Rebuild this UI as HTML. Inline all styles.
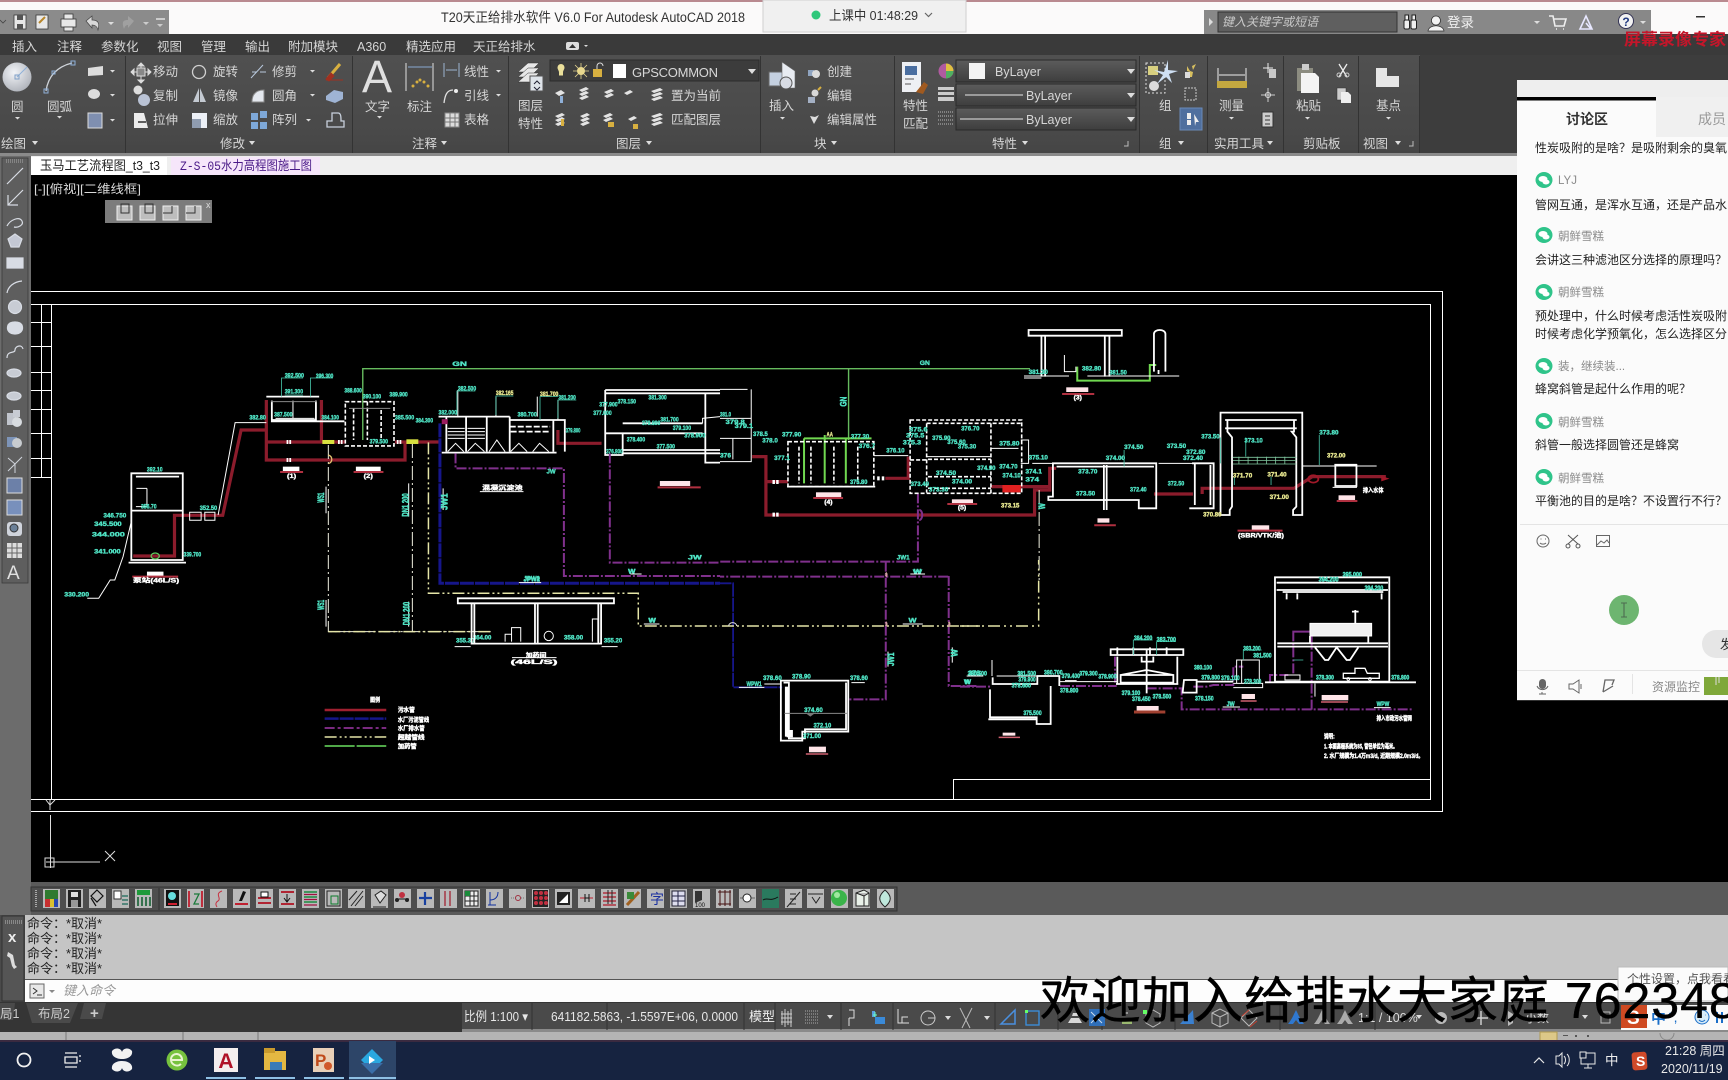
<!DOCTYPE html>
<html><head><meta charset="utf-8"><style>
html,body{margin:0;padding:0;background:#000;width:1728px;height:1080px;overflow:hidden}
svg{display:block;font-family:"Liberation Sans","Noto Sans CJK SC",sans-serif}
.l{font-size:12.5px;fill:#d6d6d6}
.c{font-size:12px;fill:#222}
.n{font-size:11.5px;fill:#8a8a8a}
.m{font-size:13px;fill:#222}
.d *{vector-effect:non-scaling-stroke;fill:none}
.d text{fill:#4fe3c4;stroke:#4fe3c4;stroke-width:.45;font-size:20px;font-weight:bold}
.d text.y{fill:#e8e890;stroke:#e8e890}
.d text.w{fill:#fff;stroke:#fff;font-size:18px}
.d rect.b{fill:#fff;stroke:none}
.d rect.p{fill:#ffe4e8;stroke:none}
.wh{stroke:#fff;stroke-width:1}
.wt{stroke:#fff;stroke-width:1.8}
.wd{stroke:#fff;stroke-width:1.6;stroke-dasharray:4 2}
.re{stroke:#8c1c2c;stroke-width:3.2}
.bl{stroke:#16168a;stroke-width:2.6;stroke-dasharray:14 1}
.pu{stroke:#80308c;stroke-width:2;stroke-dasharray:10 2 2 2}
.ye{stroke:#e6e6a8;stroke-width:1.5;stroke-dasharray:12 3 2 3 2 3}
.yw{stroke:#f0f0e0;stroke-width:1;stroke-dasharray:14 3 2 3}
.gr{stroke:#66bb5e;stroke-width:1.4}
.tl{stroke:#48c8ac;stroke-width:.8}
.gy{stroke:#888;stroke-width:1}
</style></head><body>
<svg width="1728" height="1080" viewBox="0 0 1728 1080" xmlns="http://www.w3.org/2000/svg">
<defs>
<linearGradient id="rb" x1="0" y1="0" x2="0" y2="1"><stop offset="0" stop-color="#505050"/><stop offset=".8" stop-color="#494949"/><stop offset="1" stop-color="#454545"/></linearGradient>
<linearGradient id="dd" x1="0" y1="0" x2="0" y2="1"><stop offset="0" stop-color="#5c5c5c"/><stop offset="1" stop-color="#3e3e3e"/></linearGradient>
<radialGradient id="ci" cx=".4" cy=".35" r=".8"><stop offset="0" stop-color="#f2f4f8"/><stop offset="1" stop-color="#a4a8b0"/></radialGradient>
</defs>

<!-- base -->
<rect width="1728" height="1080" fill="#000"/>
<rect x="0" y="0" width="1728" height="34" fill="#fbfafa"/>
<rect x="0" y="0" width="1728" height="2" fill="#b98a90"/>
<rect x="0" y="34" width="1728" height="21" fill="#3a3a3a"/>
<rect x="0" y="55" width="1420" height="98" fill="url(#rb)"/>
<rect x="1420" y="55" width="308" height="98" fill="#3d3d3d"/>
<rect x="0" y="153" width="1728" height="3" fill="#8a8a8a"/>
<rect x="0" y="156" width="1728" height="19" fill="#efefef"/>

<!-- QAT -->
<rect x="0" y="10" width="169" height="24" fill="#8b8b8b"/>
<g fill="#e8e8e8" stroke="#3a3a3a" stroke-width=".8">
<path d="M0 20l3 3 3-3" fill="none" stroke="#444"/>
<rect x="14" y="15" width="12" height="14" />
<rect x="36" y="15" width="12" height="14"/>
<rect x="61" y="19" width="15" height="8"/><rect x="64" y="14" width="9" height="5"/><rect x="64" y="27" width="9" height="4"/>
</g>
<path d="M17 15h6v5h-6zM17 24h6v5h-6z" fill="#555"/>
<path d="M39 23l6-6" stroke="#b8862a" stroke-width="2"/>
<path d="M86 21l6-5v4c6 0 8 3 6 10-1-4-3-5-6-5v3z" fill="#d8d8d8" stroke="#444" stroke-width=".7"/>
<path d="M108 22l3 3 3-3z" fill="#ddd"/>
<path d="M134 21l-6-5v4c-6 0-6 3-4 9 1-3 2-4 4-4v3z" fill="#a0a0a0"/>
<path d="M143 22l3 3 3-3zM156 18h9v2h-9zM157 24l3 3 3-3z" fill="#ccc"/>

<!-- title -->
<text x="441" y="22" font-size="13.5" fill="#333" textLength="304" lengthAdjust="spacingAndGlyphs">T20天正给排水软件 V6.0 For Autodesk AutoCAD 2018</text>

<!-- timer -->
<rect x="763" y="0" width="203" height="32" fill="#f0f0f0" stroke="#cfcfcf"/>
<circle cx="816" cy="15" r="4.5" fill="#2fc77a"/>
<text x="829" y="20" font-size="13" fill="#333" textLength="89" lengthAdjust="spacingAndGlyphs">上课中 01:48:29</text>
<path d="M925 13l3.5 3.5 3.5-3.5" fill="none" stroke="#666" stroke-width="1.2"/>

<!-- search area -->
<rect x="1204" y="10" width="447" height="24" fill="#888"/>
<rect x="1218" y="12" width="179" height="20" fill="#5f5f5f" stroke="#333"/>
<path d="M1209 18l4 4-4 4z" fill="#ddd"/>
<text x="1222" y="26" font-size="12" font-style="italic" fill="#c8c8c8">键入关键字或短语</text>
<g fill="#f0f0f0" stroke="#222" stroke-width="1"><rect x="1404" y="20" width="5.500" height="9" rx="1.500"/><rect x="1411" y="20" width="5.500" height="9" rx="1.500"/><rect x="1405" y="15" width="3.500" height="5"/><rect x="1412" y="15" width="3.500" height="5"/></g>
<path d="M1436 16a4.500 4.500 0 1 1-.1 0zM1428 31c1-7 15-7 16 0z" fill="#f2f2f2" stroke="#333" stroke-width=".8"/>
<text x="1447" y="27" font-size="13.5" fill="#f0f0f0">登录</text>
<path d="M1534 21l3 3 3-3z" fill="#ddd"/>
<path d="M1549 16h4l2 10h9l2-7h-12M1556 29h1M1563 29h1" fill="none" stroke="#eee" stroke-width="1.6"/>
<path d="M1580 29l6-13 6 13zM1586 23l5 6" fill="none" stroke="#e8e8ff" stroke-width="1.6"/>
<circle cx="1626" cy="21" r="7.500" fill="#f2f2f2" stroke="#335" stroke-width="1"/>
<text x="1626" y="26" font-size="12" font-weight="bold" text-anchor="middle" fill="#223a80">?</text>
<path d="M1640 21l3 3 3-3z" fill="#ddd"/>
<rect x="1696" y="16" width="9" height="1.500" fill="#333"/>
<text x="1624" y="45" font-size="16.500" font-weight="bold" fill="#c4162a" textLength="102" lengthAdjust="spacingAndGlyphs">屏幕录像专家</text>

<!-- ribbon tabs -->
<g class="l">
<text x="12" y="51">插入</text><text x="57" y="51">注释</text><text x="101" y="51">参数化</text><text x="157" y="51">视图</text><text x="201" y="51">管理</text><text x="245" y="51">输出</text><text x="288" y="51">附加模块</text><text x="357" y="51">A360</text><text x="406" y="51">精选应用</text><text x="473" y="51">天正给排水</text>
</g>
<rect x="566" y="42" width="13" height="8" rx="2" fill="#ddd"/><path d="M569 48l3.500-4 3.500 4z" fill="#333"/><path d="M584 45l2 2 2-2z" fill="#ddd"/>

<!-- ribbon separators -->
<g fill="#333"><rect x="125" y="56" width="1" height="97"/><rect x="352" y="56" width="1" height="97"/><rect x="508" y="56" width="1" height="97"/><rect x="760" y="56" width="1" height="97"/><rect x="894" y="56" width="1" height="97"/><rect x="1139" y="56" width="1" height="97"/><rect x="1207" y="56" width="1" height="97"/><rect x="1283" y="56" width="1" height="97"/><rect x="1358" y="56" width="1" height="97"/><rect x="1419" y="56" width="1" height="97"/></g>

<!-- draw panel -->
<circle cx="17" cy="77" r="14.500" fill="url(#ci)"/><path d="M17 77l10-10" stroke="#8fb0d8"/><rect x="15" y="75" width="4" height="4" fill="none" stroke="#7fa0c8"/>
<path d="M46 91c2-14 10-24 26-28" fill="none" stroke="#cfd4da" stroke-width="1.300"/><g fill="none" stroke="#8fb0d8"><rect x="44" y="89" width="4" height="4"/><rect x="52" y="71" width="3" height="3"/><rect x="71" y="61" width="4" height="4"/></g>
<g fill="#dcdcdc"><path d="M88 68l15-2v9l-15 1z"/><ellipse cx="94" cy="94" rx="6" ry="5"/><rect x="88" y="113" width="14" height="15" fill="#7f8fb0" stroke="#ddd"/></g>
<g fill="#ddd"><path d="M110 70l2.500 2.500 2.500-2.500zM110 94l2.500 2.500 2.500-2.500zM110 119l2.500 2.500 2.500-2.500zM15 117l2.500 2.500 2.500-2.500zM57 116l2.500 2.500 2.500-2.500zM377 116l2.500 2.500 2.500-2.500zM310 70l2.500 2.500 2.500-2.500zM310 94l2.500 2.500 2.500-2.500zM306 119l2.500 2.500 2.500-2.500zM496 70l2.500 2.500 2.500-2.500zM496 94l2.500 2.500 2.500-2.500zM780 117l2.500 2.500 2.500-2.500zM1229 117l2.500 2.500 2.500-2.500zM1305 117l2.500 2.500 2.500-2.500zM1386 117l2.500 2.500 2.500-2.500z"/></g>
<text class="l" x="11" y="111">圆</text><text class="l" x="47" y="111">圆弧</text>

<!-- modify panel -->
<path d="M141 63v20M131 72h20M141 63l-3 3h6zM141 83l-3-3h6zM131 72l3-3v6zM151 72l-3-3v6z" fill="#dcdcdc" stroke="#dcdcdc"/><rect x="137" y="68" width="8" height="8" fill="#888" stroke="#ddd"/>
<circle cx="138" cy="90" r="4.500" fill="#ddd"/><circle cx="144" cy="100" r="6" fill="#b9c2d4"/>
<path d="M134 113h10l4 15h-14z" fill="#ececec"/><path d="M138 122h8" stroke="#111" stroke-width="1.300"/>
<text class="l" x="153" y="76">移动</text><text class="l" x="153" y="100">复制</text><text class="l" x="153" y="124">拉伸</text>
<circle cx="199" cy="72" r="6.500" fill="none" stroke="#d0d0d0" stroke-width="1.300"/>
<path d="M199 88l-6 14h6zM200 88l6 14h-6z" fill="#c4cad2"/>
<rect x="192" y="113" width="15" height="15" fill="#ecf0f6"/><rect x="192" y="119" width="9" height="9" fill="#8f9cb0"/>
<text class="l" x="213" y="76">旋转</text><text class="l" x="213" y="100">镜像</text><text class="l" x="213" y="124">缩放</text>
<path d="M251 78l12-13M252 72h5M260 72h6" stroke="#b8c8dc" fill="none"/>
<path d="M252 102c0-8 4-12 12-12v12z" fill="#e4e8ee" stroke="#888"/>
<g fill="#7ea8d8"><rect x="251" y="113" width="7" height="7"/><rect x="260" y="111" width="7" height="7"/><rect x="251" y="122" width="7" height="7"/><rect x="260" y="122" width="7" height="7"/></g>
<text class="l" x="272" y="76">修剪</text><text class="l" x="272" y="100">圆角</text><text class="l" x="272" y="124">阵列</text>
<path d="M328 78l12-14" stroke="#d8b040" stroke-width="3"/><path d="M326 79l5-6 3 3-5 5zM326 80h17" stroke="#a03020" fill="#a03020"/>
<path d="M326 96l8-6 9 2v7l-8 4-9-3z" fill="#9fb4d4"/>
<path d="M327 127v-6h5v-8h6c3 0 3 4 3 8h3v6z" fill="none" stroke="#c8d0dc" stroke-width="1.300"/>

<!-- annotation -->
<text x="362" y="92" font-size="45" fill="#e0e0e0">A</text>
<text class="l" x="365" y="111">文字</text>
<path d="M406 63v28M433 63v28" stroke="#e0e0e0"/><path d="M408 67h24" stroke="#88a8d0"/><g fill="#d8b040"><circle cx="413" cy="86" r="1.500"/><circle cx="417" cy="82" r="1.500"/><circle cx="420" cy="80" r="1.500"/><circle cx="424" cy="82" r="1.500"/><circle cx="428" cy="86" r="1.500"/></g>
<text class="l" x="407" y="111">标注</text>
<path d="M444 63v14M459 63v14M446 70h11" stroke="#9cb4d0"/>
<text class="l" x="464" y="76">线性</text>
<path d="M444 103c1-8 3-13 9-13" fill="none" stroke="#e0e0e0" stroke-width="1.300"/><circle cx="456" cy="91" r="2" fill="#eee"/>
<text class="l" x="464" y="100">引线</text>
<rect x="445" y="113" width="14" height="14" fill="#ddd" stroke="#888"/><path d="M445 118h14M445 122h14M450 113v14M455 113v14" stroke="#777"/>
<text class="l" x="464" y="124">表格</text>

<!-- layers -->
<g fill="#e8e8e8" stroke="#333" stroke-width=".5"><path d="M518 72l10-9h11l-9 9z"/><path d="M518 77l10-9h11l-9 9z"/><path d="M518 82l10-9h11l-9 9z"/></g>
<rect x="530" y="76" width="13" height="15" fill="#dfe4ea" stroke="#555"/><path d="M534 84l3-3 3 3M534 87l3 3 3-3" stroke="#223" fill="none"/>
<text class="l" x="518" y="110">图层</text><text class="l" x="518" y="128">特性</text>
<rect x="550" y="60" width="209" height="21" fill="#3c3c3c" stroke="#2c2c2c"/>
<path d="M561 64a3.500 3.500 0 0 1 3.500 3.500c0 2-1.500 3-1.500 5v3h-4v-3c0-2-1.500-3-1.500-5a3.500 3.500 0 0 1 3.500-3.500z" fill="#eadf9a"/>
<circle cx="581" cy="71" r="4" fill="#ead98c"/><path d="M581 63v16M573 71h16M575 65l12 12M587 65l-12 12" stroke="#e8d890" stroke-width=".8"/>
<rect x="593" y="69" width="9" height="8" fill="#d8b040"/><path d="M597 69v-3a3 3 0 0 1 6 0" fill="none" stroke="#ddd"/>
<rect x="613" y="64" width="13" height="14" fill="#fff"/>
<text x="632" y="77" font-size="13" fill="#d8d8d8" textLength="86">GPSCOMMON</text>
<path d="M748 69l4 5 4-5z" fill="#ddd"/>
<g fill="#e4e4e4"><path d="M555 93l6-3 4 3-6 3zM579 90l7-3 3 2-7 3zM579 94l7-3 3 2-7 3zM579 98l7-3 3 2-7 3zM604 92l7-3 3 2-7 3zM604 96l7-3 3 2-7 3zM624 93l6-3 3 2-6 3zM651 91l9-3 3 2-9 3zM651 95l9-3 3 2-9 3zM651 99l9-3 3 2-9 3z"/><path d="M555 116l7-3 3 2-7 3zM555 120l7-3 3 2-7 3zM555 124l7-3 3 2-7 3zM580 116l7-3 3 2-7 3zM580 120l7-3 3 2-7 3zM580 124l7-3 3 2-7 3zM603 116l7-3 3 2-7 3zM603 120l7-3 3 2-7 3zM628 119l6-3 3 2-6 3zM651 116l9-3 3 2-9 3zM651 120l9-3 3 2-9 3zM651 124l9-3 3 2-9 3z"/></g>
<g fill="#d8b040"><rect x="561" y="119" width="3" height="7"/><rect x="608" y="122" width="6" height="5"/><rect x="633" y="124" width="5" height="5"/><rect x="560" y="96" width="3" height="7" fill="#8fb0d8"/></g>
<text class="l" x="671" y="100">置为当前</text><text class="l" x="671" y="124">匹配图层</text>
<text class="l" x="769" y="110">插入</text>
<rect x="769" y="72" width="15" height="14" fill="#c4d0e0" stroke="#666"/><path d="M782 62l13 9v17h-13z" fill="#e8ecf2" stroke="#666" stroke-width=".6"/><circle cx="786" cy="83" r="6" fill="#d8dce4" stroke="#555"/>
<rect x="808" y="70" width="6" height="6" fill="#8fa4c0"/><circle cx="816" cy="74" r="4" fill="#dcdcdc"/><text class="l" x="827" y="76">创建</text>
<rect x="808" y="97" width="7" height="6" fill="#a4b0c4"/><circle cx="815" cy="93" r="3.500" fill="#d8d8d8"/><path d="M818 90l3-3" stroke="#d8b040" stroke-width="2"/><text class="l" x="827" y="100">编辑</text>
<path d="M810 116l4 8 5-9-4 2z" fill="#ddd"/><text class="l" x="827" y="124">编辑属性</text>

<!-- properties -->
<rect x="902" y="62" width="19" height="30" fill="#eef0f4"/><rect x="905" y="66" width="12" height="9" fill="#4a6ea0"/><path d="M905 79h9M905 84h6" stroke="#555"/><path d="M916 92l8-10 4 3-5 9z" fill="#a05a20"/>
<text class="l" x="903" y="110">特性</text><text class="l" x="903" y="128">匹配</text>
<circle cx="946" cy="71" r="7.500" fill="#b05aa0"/><path d="M946 71v-7.500a7.500 7.500 0 0 1 7.500 7.500z" fill="#e0c040"/><path d="M946 71h7.500a7.500 7.500 0 0 1-7.500 7.500z" fill="#50b060"/>
<rect x="938" y="87" width="16" height="3" fill="#ccc"/><rect x="938" y="92" width="16" height="3" fill="#ccc"/><rect x="938" y="97" width="16" height="4" fill="#ccc"/>
<path d="M938 112h16M938 116h16M938 120h16M938 124h16" stroke="#bbb" stroke-dasharray="1 1"/>
<g fill="url(#dd)" stroke="#2a2a2a"><rect x="956" y="60" width="180" height="22"/><rect x="956" y="84" width="180" height="22"/><rect x="956" y="108" width="180" height="22"/></g>
<rect x="969" y="63" width="16" height="16" fill="#f4f4f4"/>
<text class="l" x="995" y="76">ByLayer</text>
<path d="M965 95h58M960 119h63" stroke="#e8e8e8"/>
<text class="l" x="1026" y="100">ByLayer</text><text class="l" x="1026" y="124">ByLayer</text>
<path d="M1127 69l4 5 4-5zM1127 93l4 5 4-5zM1127 117l4 5 4-5z" fill="#ddd"/>

<!-- group -->
<rect x="1146" y="63" width="19" height="30" fill="none" stroke="#ddd" stroke-dasharray="2 2"/><rect x="1148" y="66" width="10" height="9" fill="#d8d080"/><circle cx="1154" cy="86" r="5" fill="#dcdcdc"/>
<path d="M1168 60l-4 12-10-2 9 5-6 9 9-7 6 6-3-9 9-3-10-1z" fill="#cfe0f4"/>
<text class="l" x="1159" y="110">组</text>
<path d="M1187 66l3 5 3 1-1 5h-3l1-5-3-1zM1192 66l4-2-3 6z" fill="#d8c060"/><rect x="1185" y="72" width="5" height="6" fill="#dcdcdc"/>
<rect x="1185" y="88" width="11" height="12" fill="none" stroke="#ccc" stroke-dasharray="2 1"/>
<rect x="1180" y="108" width="22" height="22" fill="#4f6f9e" stroke="#6a8ab8"/><path d="M1187 113h4v6h-4zM1187 120h4v5h-4zM1194 114l5 8-3 0-1 4z" fill="#eee"/>
<path d="M1218 68v14M1246 68v14M1219 75h26" stroke="#eee" fill="none"/>
<rect x="1217" y="81" width="30" height="7" fill="#c4a840"/>
<text class="l" x="1219" y="110">测量</text>
<path d="M1263 68h10M1268 63v10" stroke="#eee"/><rect x="1269" y="69" width="7" height="9" fill="#c8c8c8"/>
<path d="M1268 88v14M1261 95h14" stroke="#ccc"/><circle cx="1268" cy="95" r="2.500" fill="none" stroke="#ddd"/>
<rect x="1262" y="112" width="11" height="15" fill="#ccc" stroke="#333"/><path d="M1265 116h5M1265 120h5M1265 124h5" stroke="#333"/>

<!-- clipboard -->
<rect x="1297" y="68" width="16" height="23" fill="#8c8c80"/><rect x="1302" y="64" width="7" height="6" fill="#ccc"/><path d="M1301 73h14l4 4v16h-18z" fill="#f4f4f4"/>
<text class="l" x="1296" y="110">粘贴</text>
<path d="M1339 64l8 13M1347 64l-8 13" stroke="#eee" stroke-width="1.300"/><circle cx="1339" cy="75" r="2" fill="none" stroke="#ccc"/><circle cx="1347" cy="75" r="2" fill="none" stroke="#ccc"/>
<rect x="1337" y="88" width="9" height="12" fill="#ccc" stroke="#333" stroke-width=".5"/><path d="M1341 92h7l3 3v8h-10z" fill="#eee"/>
<path d="M1376 68h11v8h12v11h-23z" fill="#e6e6e6"/>
<text class="l" x="1376" y="110">基点</text>

<!-- panel labels -->
<g class="l"><text x="1" y="148">绘图</text><text x="220" y="148">修改</text><text x="412" y="148">注释</text><text x="616" y="148">图层</text><text x="814" y="148">块</text><text x="992" y="148">特性</text><text x="1159" y="148">组</text><text x="1214" y="148">实用工具</text><text x="1303" y="148">剪贴板</text><text x="1363" y="148">视图</text></g>
<path d="M32 141l3 4 3-4zM249 141l3 4 3-4zM441 141l3 4 3-4zM646 141l3 4 3-4zM831 141l3 4 3-4zM1022 141l3 4 3-4zM1178 141l3 4 3-4zM1267 141l3 4 3-4zM1395 141l3 4 3-4z" fill="#ddd"/>
<path d="M1128 141v5h-4M1413 141v5h-4" stroke="#bbb" fill="none"/>

<!-- doc tabs -->
<rect x="31" y="157" width="136" height="18" fill="#fff"/>
<rect x="171" y="157" width="149" height="18" fill="#f6e6fa"/>
<text x="40" y="170" font-size="13" fill="#222" textLength="120" lengthAdjust="spacingAndGlyphs">玉马工艺流程图_t3_t3</text>
<text x="180" y="170" font-size="13" fill="#4a1a88" textLength="132" lengthAdjust="spacingAndGlyphs" font-family="'Liberation Mono','Noto Sans CJK SC',monospace">Z-S-05水力高程图施工图</text>

<!-- drawing black area already -->
<text x="34" y="193" font-size="12" fill="#d8d8d8" textLength="107" lengthAdjust="spacingAndGlyphs">[-][俯视][二维线框]</text>
<rect x="105" y="200" width="107" height="23" fill="#7c7c7c"/>
<g fill="#bdbdbd" stroke="#eee"><rect x="117" y="206" width="15" height="14"/><rect x="140" y="206" width="15" height="14"/><rect x="163" y="206" width="15" height="14"/><rect x="186" y="206" width="15" height="14"/></g>
<path d="M121 204h8v9h-8zM145 204h8v9h-8zM163 213h9v-7M186 213h9v-7" fill="none" stroke="#333"/>
<text x="206" y="208" font-size="9" fill="#ddd">x</text>

<!-- frames -->
<g fill="none" stroke="#fff" stroke-width="1">
<path d="M31 291.500H1442.500V811.500H31"/>
<path d="M31 304.500H1430.500V799.500H31"/>
<path d="M51.500 304.500V799.500"/>
<path d="M953.500 799V779.500H1430"/>
<path d="M31 322.500H51M31 346.500H51M31 372.500H51M31 390.500H51M31 409.500H51M31 433.500H51M31 458.500H51M31 477.500H51"/>
<path d="M41.500 304.500V477"/>
</g>
<path d="M50.500 815V868M46 862H100M105 851l10 10M115 851l-10 10M50 800v10M46 800l4 5 5-5" fill="none" stroke="#ddd" stroke-width="1"/>
<rect x="45" y="858" width="9" height="9" fill="none" stroke="#ddd"/>

<!-- Zoom-6 diagram -->
<g class="d" transform="translate(0,280) scale(.4592,.3333)">
<path class="re" d="M290 828H380V706H485L525 450H580M580 360V540H882V486H955M580 486H700V360M700 486H752M860 486H882M1215 450V490H1310"/>
<path class="gr" d="M790 335V266H1568M790 266V480"/>
<path class="wh" d="M190 955H215L240 900H250L268 830L285 730M475 705L512 428H580"/>
<path class="wt" d="M286 690V580H398V840H286ZM286 692H398M296 590H390M280 848H405"/>
<path class="wh" d="M320 625V680H296M297 625H320M413 697h25v24h-25zM446 697h22v24h-22z"/>
<path class="wt" d="M580 350H695M592 362V420H688V362M590 424H750"/>
<path class="wh" d="M638 362V415M600 415H685"/>
<path class="wd" d="M752 365H858V498H752ZM800 365V480M770 385V480M830 390V480"/>
<path class="wt" d="M955 410H1110M972 410V515M1015 410V515M1060 410V515M1110 410V515M962 518H1212M1108 420H1230V515M1205 420V515"/>
<path class="wh" d="M975 445H1012M975 455H1012M975 465H1012M975 475H1012M1018 445H1056M1018 455H1056M1018 465H1056M1018 475H1056M975 515L992 490L1010 515M1018 515L1035 490L1055 515M1065 515L1082 480L1100 515M1112 515L1130 490L1148 515M1160 515L1175 490L1195 515"/>
<path class="wt" d="M1110 440H1198M1112 455H1198" stroke-dasharray="6 2"/>
<path class="wt" d="M1318 330V525H1356V460H1318M1318 330H1568M1318 340H1568M1536 340V548H1568M1356 430H1530M1356 460H1530M1356 510H1568M1356 520H1568"/>
<path class="wh" d="M1170 350V410M1215 360V420M1080 350V410M997 330V410M1530 430V415L1568 410"/>
<path class="gy" d="M590 365H690M760 385H850"/>
<path class="wt" d="M626 480v12M632 480v12M626 534v12M632 534v12M738 480v12M744 480v12M866 480v12M872 480v12" stroke-width="2.500"/>
<rect class="b" x="702" y="480" width="26" height="12" style="fill:#d8e040"/><rect class="b" x="885" y="478" width="26" height="14" style="fill:#d8e040"/>
<path class="bl" d="M958 430V910H1568" style="stroke-width:3"/>
<path class="pu" d="M992 520V565H1228V888H1568M1328 520V848H1568"/>
<path d="M962 425H975" style="stroke:#9a1c60;stroke-width:5"/>
<path class="yw" d="M715 495V1055H1070" />
<path class="ye" d="M715 1055H1070"/>
<path class="yw" d="M898 492V1055"/>
<path class="ye" d="M933 487V940H1390V1038H1568"/>
<path d="M715 525a12 14 0 0 1 0 26" style="stroke:#e0c070;stroke-width:1.300"/>
<path class="wh" d="M710 620V700M710 960V1040M890 610V710M890 965V1040M965 625V690" />
<!-- teal labels -->
<path class="tl" d="M613 350V294H660M676 350V294H725M620 345H660M995 405V333H1035M1080 405V348H1118M1176 420V350H1215M1215 415V360H1255"/>
<g>
<text x="320" y="574" textLength="34" lengthAdjust="spacingAndGlyphs">392.10</text>
<text x="307" y="686" textLength="34" lengthAdjust="spacingAndGlyphs">356.70</text>
<text x="435" y="690" textLength="38" lengthAdjust="spacingAndGlyphs">352.50</text>
<text x="225" y="712" textLength="50" lengthAdjust="spacingAndGlyphs">346.750</text>
<text x="205" y="738" textLength="60" lengthAdjust="spacingAndGlyphs">345.500</text>
<text x="200" y="770" textLength="72" lengthAdjust="spacingAndGlyphs">344.000</text>
<text x="205" y="820" textLength="58" lengthAdjust="spacingAndGlyphs">341.000</text>
<text x="400" y="830" textLength="38" lengthAdjust="spacingAndGlyphs">339.700</text>
<text x="140" y="950" textLength="54" lengthAdjust="spacingAndGlyphs">330.200</text>
<text x="620" y="292" textLength="42" lengthAdjust="spacingAndGlyphs">392.500</text>
<text x="688" y="294" textLength="38" lengthAdjust="spacingAndGlyphs">396.300</text>
<text x="620" y="340" textLength="40" lengthAdjust="spacingAndGlyphs">391.300</text>
<text x="597" y="410" textLength="40" lengthAdjust="spacingAndGlyphs">387.500</text>
<text x="543" y="418" textLength="36" lengthAdjust="spacingAndGlyphs">382.80</text>
<text x="700" y="418" textLength="38" lengthAdjust="spacingAndGlyphs">384.100</text>
<text x="790" y="355" textLength="40" lengthAdjust="spacingAndGlyphs">390.100</text>
<text x="848" y="350" textLength="40" lengthAdjust="spacingAndGlyphs">389.900</text>
<text x="750" y="338" textLength="38" lengthAdjust="spacingAndGlyphs">388.600</text>
<text x="860" y="418" textLength="42" lengthAdjust="spacingAndGlyphs">385.500</text>
<text x="905" y="428" textLength="38" lengthAdjust="spacingAndGlyphs">384.300</text>
<text x="955" y="403" textLength="40" lengthAdjust="spacingAndGlyphs">382.000</text>
<text x="997" y="332" textLength="40" lengthAdjust="spacingAndGlyphs">382.500</text>
<text class="y" x="1080" y="345" textLength="38" lengthAdjust="spacingAndGlyphs">382.165</text>
<text class="y" x="1176" y="348" textLength="40" lengthAdjust="spacingAndGlyphs">381.700</text>
<text x="1216" y="358" textLength="38" lengthAdjust="spacingAndGlyphs">381.200</text>
<text x="1127" y="410" textLength="42" lengthAdjust="spacingAndGlyphs">380.700</text>
<text x="1232" y="458" textLength="32" lengthAdjust="spacingAndGlyphs">379.800</text>
<text x="1345" y="370" textLength="40" lengthAdjust="spacingAndGlyphs">378.150</text>
<text x="1305" y="380" textLength="40" lengthAdjust="spacingAndGlyphs">377.900</text>
<text x="1292" y="405" textLength="40" lengthAdjust="spacingAndGlyphs">377.000</text>
<text x="1412" y="358" textLength="40" lengthAdjust="spacingAndGlyphs">381.300</text>
<text x="1438" y="425" textLength="40" lengthAdjust="spacingAndGlyphs">381.700</text>
<text x="1398" y="435" textLength="40" lengthAdjust="spacingAndGlyphs">379.800</text>
<text x="1465" y="450" textLength="40" lengthAdjust="spacingAndGlyphs">379.100</text>
<text x="1490" y="473" textLength="46" lengthAdjust="spacingAndGlyphs">378.900</text>
<text x="1365" y="485" textLength="40" lengthAdjust="spacingAndGlyphs">378.400</text>
<text x="1430" y="505" textLength="40" lengthAdjust="spacingAndGlyphs">377.500</text>
<text x="1320" y="520" textLength="36" lengthAdjust="spacingAndGlyphs">376.800</text>
<text x="805" y="490" textLength="40" lengthAdjust="spacingAndGlyphs">379.500</text>
<text x="985" y="258" textLength="32" lengthAdjust="spacingAndGlyphs">GN</text>
<text x="1140" y="905" textLength="36" lengthAdjust="spacingAndGlyphs">JPW2</text>
<text x="1190" y="580" textLength="20" lengthAdjust="spacingAndGlyphs">JW</text>
<text x="1498" y="838" textLength="30" lengthAdjust="spacingAndGlyphs">JW</text>
<text x="1368" y="880" textLength="16" lengthAdjust="spacingAndGlyphs">W</text>
<text x="1412" y="1028" textLength="16" lengthAdjust="spacingAndGlyphs">W</text>
<text x="1228" y="1078" textLength="42" lengthAdjust="spacingAndGlyphs">358.00</text>
<text x="1030" y="1078" textLength="40" lengthAdjust="spacingAndGlyphs">364.00</text>
<text x="993" y="1088" textLength="40" lengthAdjust="spacingAndGlyphs">355.30</text>
<text x="1315" y="1088" textLength="40" lengthAdjust="spacingAndGlyphs">355.20</text>
</g>
<g style="font-size:18px"><text x="0" y="0" transform="translate(706,668) rotate(-90)" textLength="30" lengthAdjust="spacingAndGlyphs">WS1</text><text transform="translate(706,990) rotate(-90)" textLength="30" lengthAdjust="spacingAndGlyphs">WS1</text><text transform="translate(890,710) rotate(-90)" textLength="70" lengthAdjust="spacingAndGlyphs">DN1 200</text><text transform="translate(892,1036) rotate(-90)" textLength="70" lengthAdjust="spacingAndGlyphs">DN1 200</text><text transform="translate(975,690) rotate(-90)" textLength="50" lengthAdjust="spacingAndGlyphs">JW1</text></g>
<!-- title blocks -->
<rect class="b" x="320" y="875" width="36" height="13"/><rect class="b" x="616" y="560" width="36" height="14"/><rect class="b" x="775" y="560" width="54" height="14"/><rect class="p" x="1437" y="603" width="66" height="15"/>
<path d="M288 890H388M610 576H660M770 576H835M1432 622H1526" style="stroke:#b03040;stroke-width:2"/>
<text class="w" x="290" y="908" textLength="100" lengthAdjust="spacingAndGlyphs">泵站(46L/S)</text>
<text class="w" x="1050" y="630" textLength="88" lengthAdjust="spacingAndGlyphs">混凝沉淀池</text>
<path class="wh" d="M1045 635H1140M1115 1133H1212"/>
<text class="w" x="1145" y="1132" textLength="45" lengthAdjust="spacingAndGlyphs">加药间</text>
<text class="w" x="1112" y="1152" textLength="102" lengthAdjust="spacingAndGlyphs">(46L/S)</text>
<text class="w" x="625" y="594" textLength="20" lengthAdjust="spacingAndGlyphs">(1)</text><text class="w" x="792" y="594" textLength="20" lengthAdjust="spacingAndGlyphs">(2)</text>
<!-- pump house -->
<rect x="997" y="955" width="340" height="15" style="stroke:#fff;stroke-width:1.800"/>
<path class="wt" d="M1027 970V1090M1033 970V1090M1165 970V1090M1171 970V1090M1303 970V1090M1309 970V1090M1025 1091H1311"/>
<path class="wh" d="M1100 1085v-22h14v22M1114 1085v-42h20v42M1290 1085v-68h12v68M990 1100H1025M1310 1100H1345"/>
<ellipse cx="1195" cy="1068" rx="10" ry="14" class="wh"/>
<circle cx="338" cy="828" r="9" style="stroke:#60d060;stroke-width:1.200"/>
</g>

<!-- Zoom-7 diagram -->
<g class="d" transform="translate(720,300) scale(.4592,.3333)">
<path class="gr" d="M0 206H675M280 206V420" />
<path class="gr" d="M183 415V550M228 405V550M274 415V550M183 415H330" style="stroke-width:2;stroke:#70d850"/>
<path class="gr" d="M778 200V242H936V195H950" style="stroke-width:2;stroke:#70d850"/>
<path class="re" d="M70 470H100V645H685V570H718V505H732M100 545H148M360 535H410V470M590 560H715M945 582H1030M1050 582V565H1250L1290 530H1450"/>
<path d="M615 555h40v22h-40z" style="fill:#e02020;stroke:none"/>
<path d="M1440 528L1458 536L1440 544z" style="fill:#a01828;stroke:none"/>
<circle cx="1292" cy="537" r="11" style="stroke:#a01828;stroke-width:1.800"/>
<path class="pu" d="M431 580V785H0M497 830H0"/>
<path class="pu" d="M434 630a6 14 0 0 1 0 30" style="stroke-dasharray:none"/>
<path class="wh" d="M60 268H0M68 268V485H0M0 355H68M0 415H68M28 415V478" />
<path class="wt" d="M672 90H875V107H672ZM700 107V230M708 107V230M838 107V230M848 107V230"/>
<path class="wh" d="M662 228H760M800 228H1000M662 234H700M750 165V215H775V200" />
<path class="wt" d="M945 215V102C945 86 970 86 970 102V215M955 210V222"/>
<path class="wd" d="M148 425H335V560H148ZM172 440V550M198 440V550M248 440V550M300 440V550"/>
<path class="wt" d="M146 560H338" />
<path class="wd" d="M414 360H657V580H414ZM450 370H655M590 370V585M450 370V578M414 480H450M453 478H590M453 530H590M453 565H590"/>
<path class="wh" d="M335 467H410M450 470H590M590 445H650M655 420H672V490H655M680 490H730M955 490H1030"/>
<path class="wt" d="M725 490H950V625H912V600H715V590H725ZM733 500H945M836 495V630M842 495V630" />
<path class="wt" d="M1028 490H1075V625H1022M1034 490V615M1068 495V615"/>
<path class="wt" d="M1090 338H1268V645H1248V630L1255 620V412L1245 395H1250V360H1105V395L1115 412V620L1110 630V645H1090ZM1100 360H1256M1100 385H1256"/>
<path class="gr" d="M1117 472H1255M1117 482H1255M1117 492H1255M1130 470V492M1150 470V492M1170 470V492M1190 470V492M1210 470V492M1230 470V492" style="stroke:#80c8a0;stroke-width:.8"/>
<path class="wh" d="M1268 498H1430M1338 493H1386V562H1334" />
<path class="wt" d="M1340 495H1386V558H1340Z"/>
<path class="yw" d="M695 570V840" />
<path class="tl" d="M1145 412V470M1305 405V495M1090 412V490M880 450V500M1200 530V555M1120 530V555"/>
<g>
<text x="788" y="212" textLength="42" lengthAdjust="spacingAndGlyphs">382.80</text><text x="672" y="222" textLength="42" lengthAdjust="spacingAndGlyphs">381.30</text><text x="848" y="224" textLength="38" lengthAdjust="spacingAndGlyphs">381.50</text>
<text x="435" y="195" textLength="22" lengthAdjust="spacingAndGlyphs">GN</text>
<text x="0" y="350" textLength="24" lengthAdjust="spacingAndGlyphs">381.0</text><text x="12" y="372" textLength="42" lengthAdjust="spacingAndGlyphs">379.8</text><text x="32" y="384" textLength="40" lengthAdjust="spacingAndGlyphs">379.1</text><text x="72" y="408" textLength="32" lengthAdjust="spacingAndGlyphs">378.5</text><text x="92" y="428" textLength="34" lengthAdjust="spacingAndGlyphs">378.0</text><text x="0" y="472" textLength="24" lengthAdjust="spacingAndGlyphs">376</text><text x="118" y="480" textLength="34" lengthAdjust="spacingAndGlyphs">377.1</text>
<text x="135" y="410" textLength="42" lengthAdjust="spacingAndGlyphs">377.90</text><text x="285" y="415" textLength="40" lengthAdjust="spacingAndGlyphs">377.30</text><text x="302" y="444" textLength="36" lengthAdjust="spacingAndGlyphs">376.7</text><text x="362" y="458" textLength="40" lengthAdjust="spacingAndGlyphs">376.10</text>
<text x="283" y="552" textLength="38" lengthAdjust="spacingAndGlyphs">375.80</text>
<text x="412" y="394" textLength="40" lengthAdjust="spacingAndGlyphs">375.6</text><text x="405" y="412" textLength="40" lengthAdjust="spacingAndGlyphs">375.5</text><text x="398" y="434" textLength="40" lengthAdjust="spacingAndGlyphs">375.3</text>
<text x="525" y="392" textLength="40" lengthAdjust="spacingAndGlyphs">376.70</text><text x="462" y="420" textLength="40" lengthAdjust="spacingAndGlyphs">375.90</text><text x="495" y="432" textLength="40" lengthAdjust="spacingAndGlyphs">375.60</text><text x="518" y="446" textLength="40" lengthAdjust="spacingAndGlyphs">375.30</text><text x="608" y="436" textLength="44" lengthAdjust="spacingAndGlyphs">375.80</text>
<text x="672" y="478" textLength="42" lengthAdjust="spacingAndGlyphs">375.10</text><text x="560" y="510" textLength="40" lengthAdjust="spacingAndGlyphs">374.90</text><text x="608" y="506" textLength="40" lengthAdjust="spacingAndGlyphs">374.70</text><text x="470" y="525" textLength="44" lengthAdjust="spacingAndGlyphs">374.50</text><text x="505" y="550" textLength="44" lengthAdjust="spacingAndGlyphs">374.00</text><text x="615" y="532" textLength="40" lengthAdjust="spacingAndGlyphs">374.10</text><text x="665" y="520" textLength="36" lengthAdjust="spacingAndGlyphs">374.1</text><text x="665" y="545" textLength="30" lengthAdjust="spacingAndGlyphs">374</text><text x="415" y="558" textLength="40" lengthAdjust="spacingAndGlyphs">373.40</text><text x="455" y="574" textLength="42" lengthAdjust="spacingAndGlyphs">373.30</text>
<text x="880" y="447" textLength="42" lengthAdjust="spacingAndGlyphs">374.50</text><text x="840" y="480" textLength="42" lengthAdjust="spacingAndGlyphs">374.00</text><text x="780" y="520" textLength="42" lengthAdjust="spacingAndGlyphs">373.70</text><text x="775" y="586" textLength="42" lengthAdjust="spacingAndGlyphs">373.50</text><text x="893" y="574" textLength="36" lengthAdjust="spacingAndGlyphs">372.40</text>
<text x="973" y="444" textLength="42" lengthAdjust="spacingAndGlyphs">373.50</text><text x="975" y="556" textLength="36" lengthAdjust="spacingAndGlyphs">372.50</text><text x="1048" y="415" textLength="40" lengthAdjust="spacingAndGlyphs">373.50</text><text x="1015" y="462" textLength="42" lengthAdjust="spacingAndGlyphs">372.80</text><text x="1008" y="480" textLength="44" lengthAdjust="spacingAndGlyphs">372.40</text>
<text x="1142" y="428" textLength="40" lengthAdjust="spacingAndGlyphs">373.10</text><text x="1305" y="403" textLength="42" lengthAdjust="spacingAndGlyphs">373.80</text>
<text class="y" x="1322" y="472" textLength="40" lengthAdjust="spacingAndGlyphs">372.00</text><text class="y" x="1117" y="532" textLength="42" lengthAdjust="spacingAndGlyphs">371.70</text><text class="y" x="1192" y="529" textLength="42" lengthAdjust="spacingAndGlyphs">371.40</text><text class="y" x="1197" y="597" textLength="42" lengthAdjust="spacingAndGlyphs">371.00</text><text class="y" x="1052" y="650" textLength="40" lengthAdjust="spacingAndGlyphs">370.80</text><text class="y" x="612" y="622" textLength="40" lengthAdjust="spacingAndGlyphs">373.15</text>
<text x="385" y="778" textLength="28" lengthAdjust="spacingAndGlyphs">JW1</text><text x="420" y="822" textLength="20" lengthAdjust="spacingAndGlyphs">W</text>
<text x="232" y="410" class="y" textLength="14" lengthAdjust="spacingAndGlyphs">AA</text>
<text x="1400" y="578" class="w" textLength="45" lengthAdjust="spacingAndGlyphs">排入水体</text>
</g>
<g style="font-size:18px"><text transform="translate(276,320) rotate(-90)" textLength="30" lengthAdjust="spacingAndGlyphs">GN</text><text transform="translate(708,628) rotate(-90)" textLength="18" lengthAdjust="spacingAndGlyphs">W</text></g>
<rect class="p" x="754" y="262" width="48" height="14"/><rect class="p" x="209" y="577" width="55" height="14"/><rect class="p" x="505" y="598" width="46" height="12"/><rect class="p" x="822" y="655" width="26" height="13"/><rect class="p" x="1158" y="676" width="38" height="14"/><rect class="p" x="1347" y="586" width="36" height="14"/>
<path d="M745 282H815M203 594H268M495 612H560M815 676H862M1127 692H1225M1343 603H1388" style="stroke:#b03040;stroke-width:2"/>
<text class="w" x="1128" y="712" textLength="100" lengthAdjust="spacingAndGlyphs">(SBR/VTK/池)</text>
<text class="w" x="770" y="298" textLength="18" lengthAdjust="spacingAndGlyphs">(3)</text><text class="w" x="227" y="612" textLength="18" lengthAdjust="spacingAndGlyphs">(4)</text><text class="w" x="518" y="628" textLength="18" lengthAdjust="spacingAndGlyphs">(5)</text>
<path class="wt" d="M117 540v12M125 540v12M117 638v12M125 638v12M345 529v12M355 529v12" style="stroke-width:2.500"/>
</g>

<!-- Zoom-8 diagram -->
<g class="d" transform="translate(280,560) scale(.4464,.3333)">
<path class="bl" d="M980 70H1015V382H1125" style="stroke-width:1.800"/>
<path class="pu" d="M1357 5V418H1275M1498 48V378H1560" />
<path class="ye" d="M990 198H1568"/>
<path class="pu" d="M1357 38a8 10 0 0 1 0 12M1357 186a8 10 0 0 1 0 12M1498 186a8 10 0 0 1 0 12" style="stroke:#d0a0a0;stroke-dasharray:none"/>
<path d="M1005 198a9 10 0 0 1 18 0" style="stroke:#ddd"/>
<path class="wt" d="M1122 362H1273V515H1170V542H1122ZM1128 368H1140V535H1176V508H1268V368"/>
<path d="M1135 380V530" style="stroke:#fff;stroke-width:3.500"/>
<path d="M1135 510h14v22h-14z" style="fill:#fff;stroke:none"/>
<path class="gy" d="M1130 460H1270"/>
<path d="M1180 462l8 8 8-8z" style="fill:#777;stroke:none"/>
<g>
<text x="1082" y="360" textLength="42" lengthAdjust="spacingAndGlyphs">378.60</text><text x="1147" y="356" textLength="42" lengthAdjust="spacingAndGlyphs">378.90</text><text x="1277" y="360" textLength="40" lengthAdjust="spacingAndGlyphs">378.60</text><text x="1174" y="456" textLength="42" lengthAdjust="spacingAndGlyphs">374.60</text><text x="1195" y="502" textLength="40" lengthAdjust="spacingAndGlyphs">372.10</text><text x="1172" y="534" textLength="40" lengthAdjust="spacingAndGlyphs">371.00</text>
<text x="1045" y="378" textLength="34" lengthAdjust="spacingAndGlyphs">WPW1</text><text x="826" y="188" textLength="16" lengthAdjust="spacingAndGlyphs">W</text><text x="1408" y="188" textLength="18" lengthAdjust="spacingAndGlyphs">W</text><text x="1542" y="345" textLength="26" lengthAdjust="spacingAndGlyphs">378</text><text x="1532" y="372" textLength="16" lengthAdjust="spacingAndGlyphs">W</text><text x="546" y="62" textLength="36" lengthAdjust="spacingAndGlyphs">JPW2</text><text x="780" y="40" textLength="16" lengthAdjust="spacingAndGlyphs">W</text><text x="1420" y="40" textLength="16" lengthAdjust="spacingAndGlyphs">W</text>
</g>
<path class="wh" d="M535 68H585M815 192H850M1395 192H1440M1028 382H1085M1085 372H1120M1280 368H1310M785 42H810M1412 42H1445" />
<path class="wh" d="M1362 275V320M1506 262V308"/>
<g style="font-size:16px"><text transform="translate(1375,318) rotate(-90)" textLength="40" lengthAdjust="spacingAndGlyphs">JW1</text><text transform="translate(1518,290) rotate(-90)" textLength="22" lengthAdjust="spacingAndGlyphs">W</text></g>
<!-- legend -->
<text class="w" x="202" y="426" textLength="22" lengthAdjust="spacingAndGlyphs">图例</text>
<path d="M100 450H238" style="stroke:#a02030;stroke-width:2.500"/><path d="M100 476H238" style="stroke:#16168a;stroke-width:2.500;stroke-dasharray:14 1"/><path d="M100 504H238" style="stroke:#7a2a80;stroke-width:2;stroke-dasharray:10 3 3 3"/><path d="M100 531H238" class="ye"/><path d="M100 558H238" style="stroke:#50a848;stroke-width:2;stroke-dasharray:30 2"/>
<text class="w" x="264" y="456" textLength="38" lengthAdjust="spacingAndGlyphs">污水管</text><text class="w" x="264" y="486" textLength="70" lengthAdjust="spacingAndGlyphs">水厂污泥管线</text><text class="w" x="264" y="512" textLength="60" lengthAdjust="spacingAndGlyphs">水厂排水管</text><text class="w" x="264" y="539" textLength="60" lengthAdjust="spacingAndGlyphs">超越管线</text><text class="w" x="264" y="566" textLength="42" lengthAdjust="spacingAndGlyphs">加药管</text>
<rect class="p" x="1185" y="560" width="38" height="17"/><path d="M1178 582H1228" style="stroke:#d06070;stroke-width:1.500"/>
</g>

<!-- Zoom-9 diagram -->
<g class="d" transform="translate(960,560) scale(.3333)">
<path class="ye" d="M0 198H236V0" style="stroke-dasharray:12 4 2 4 2 4"/>
<path class="pu" d="M0 380H90M300 378H470M465 290V370M560 385H665V448H1360M700 380H740L760 375H820V320H850M930 365V345H985M1000 340V215H1055V450M1000 215H1050" style="stroke-width:2"/>
<path class="wt" d="M90 388V472H230V492H272V378M85 478H228M98 352V372H232V348H298V378"/>
<path class="wh" d="M96 300V348M110 348H232M300 365H470"/>
<path class="wt" d="M452 268H670V285H452ZM472 262V285M520 262V285M570 262V285M620 262V285M472 290V372M652 290V372M468 372H655M482 345H640V368H482ZM482 345L560 330L640 345M545 290V305H580V290M560 270V400"/>
<path class="wt" d="M672 360H710V398H668ZM710 365H820"/>
<path class="wh" d="M830 300H898V370H830ZM820 370H908V383H820M845 300V370"/>
<path class="wt" d="M945 52H1288V365H945ZM950 68H1284M950 90H1284M952 250H1284M952 260H1284M915 367H1368"/>
<path class="wt" d="M980 100V118M1012 100V118M1265 100V118M968 96H1270" />
<path d="M1050 190H1235V228H1050Z" style="fill:#f0f0f0;stroke:#fff"/>
<path class="wt" d="M1065 262L1095 300H1105L1130 262L1160 300H1170L1195 262M1186 150V190M1176 155H1196M1050 228V248M1225 228V248"/>
<path class="wt" d="M1150 340H1185V325H1215L1222 340H1258V355H1150Z" style="stroke-width:1.300"/>
<circle cx="1165" cy="357" r="4" class="wh"/><circle cx="1230" cy="357" r="4" class="wh"/>
<path class="wh" d="M975 345H1020V360H975ZM1065 370V410"/>
<rect class="p" x="530" y="438" width="66" height="16"/><path d="M522 456H616" style="stroke:#a04030;stroke-width:3"/>
<rect class="p" x="845" y="402" width="40" height="15"/><path d="M842 423H890" style="stroke:#d06070;stroke-width:1.500"/>
<rect class="p" x="1085" y="405" width="80" height="16"/><path d="M1083 426H1164" style="stroke:#d06070;stroke-width:1.500"/>
<rect class="p" x="128" y="518" width="38" height="9"/><path d="M116 532H180" style="stroke:#d06070;stroke-width:1.500"/>
<path class="tl" d="M520 285V240H578M590 285V245H648M850 300V270H905M1000 300H1030"/>
<g>
<text x="23" y="346" textLength="58" lengthAdjust="spacingAndGlyphs">380.500</text><text x="172" y="346" textLength="56" lengthAdjust="spacingAndGlyphs">381.500</text><text x="252" y="343" textLength="56" lengthAdjust="spacingAndGlyphs">380.700</text><text x="175" y="364" textLength="52" lengthAdjust="spacingAndGlyphs">379.900</text><text x="155" y="383" textLength="58" lengthAdjust="spacingAndGlyphs">378.600</text>
<text x="305" y="354" textLength="55" lengthAdjust="spacingAndGlyphs">379.400</text><text x="358" y="346" textLength="55" lengthAdjust="spacingAndGlyphs">379.300</text><text x="415" y="356" textLength="55" lengthAdjust="spacingAndGlyphs">378.900</text><text x="300" y="398" textLength="55" lengthAdjust="spacingAndGlyphs">378.800</text><text x="190" y="465" textLength="55" lengthAdjust="spacingAndGlyphs">375.500</text>
<text x="522" y="240" textLength="55" lengthAdjust="spacingAndGlyphs">384.200</text><text x="590" y="245" textLength="58" lengthAdjust="spacingAndGlyphs">383.700</text><text x="702" y="328" textLength="54" lengthAdjust="spacingAndGlyphs">380.100</text><text x="724" y="358" textLength="56" lengthAdjust="spacingAndGlyphs">379.800</text><text x="783" y="360" textLength="56" lengthAdjust="spacingAndGlyphs">379.100</text>
<text x="485" y="405" textLength="56" lengthAdjust="spacingAndGlyphs">379.100</text><text x="516" y="423" textLength="56" lengthAdjust="spacingAndGlyphs">378.450</text><text x="578" y="415" textLength="56" lengthAdjust="spacingAndGlyphs">378.500</text><text x="705" y="422" textLength="56" lengthAdjust="spacingAndGlyphs">378.150</text>
<text x="850" y="272" textLength="52" lengthAdjust="spacingAndGlyphs">383.200</text><text x="880" y="293" textLength="55" lengthAdjust="spacingAndGlyphs">381.500</text><text x="852" y="370" textLength="52" lengthAdjust="spacingAndGlyphs">378.300</text><text x="1068" y="359" textLength="54" lengthAdjust="spacingAndGlyphs">378.300</text><text x="1294" y="359" textLength="54" lengthAdjust="spacingAndGlyphs">378.800</text>
<text x="1076" y="64" textLength="60" lengthAdjust="spacingAndGlyphs">394.200</text><text x="1148" y="50" textLength="58" lengthAdjust="spacingAndGlyphs">395.000</text><text x="1214" y="90" textLength="56" lengthAdjust="spacingAndGlyphs">394.200</text>
<text x="15" y="372" textLength="18" lengthAdjust="spacingAndGlyphs">W</text><text x="800" y="438" textLength="24" lengthAdjust="spacingAndGlyphs">JW</text><text x="1250" y="438" textLength="38" lengthAdjust="spacingAndGlyphs">WPW</text>
</g>
<path class="wh" d="M788 441H840M1242 443H1292M20 348H70M315 362H350"/>
<text class="w" x="1250" y="482" textLength="106" lengthAdjust="spacingAndGlyphs">排入市政污水管网</text>
<text class="w" x="1092" y="535" textLength="32" lengthAdjust="spacingAndGlyphs">说明:</text>
<text class="w" x="1092" y="566" textLength="220" lengthAdjust="spacingAndGlyphs">1. 本图高程系统为85, 管径单位为毫米。</text>
<text class="w" x="1092" y="594" textLength="298" lengthAdjust="spacingAndGlyphs">2. 水厂规模为1.4万m3/d, 近期规模2.0m3/d。</text>
</g>

<!-- left toolbar -->
<rect x="0" y="156" width="31" height="726" fill="#6c6c6c"/>
<rect x="2" y="158" width="26" height="425" fill="#5e5e5e" stroke="#3a3a3a" stroke-width=".8"/>
<path d="M6 160h18M6 162h18" stroke="#aaa" stroke-dasharray="1 1"/>
<g fill="none" stroke="#d8dce4" stroke-width="1.200">
<path d="M7 184l16-16"/>
<path d="M8 205l15-15M8 195v10h10"/>
<path d="M7 226c3-6 12-10 15-5 2 4-4 7-8 6"/>
<path d="M15 234l7 5-3 8h-8l-3-8z" fill="#c4c8d4"/>
<path d="M7 258h16v10h-16z" fill="#d8dce4"/>
<path d="M7 293c1-6 6-11 15-12"/>
<circle cx="15" cy="307" r="6.500" fill="#c8ccd4"/>
<path d="M8 325c2-4 12-4 14 0c2 6-2 9-7 9s-9-3-7-9z" fill="#d8dce4"/>
<path d="M7 358c0-8 8-4 8-8s7-6 8-1"/>
<ellipse cx="14" cy="373" rx="7" ry="4" fill="#c8ccd4"/>
<ellipse cx="14" cy="396" rx="7" ry="4" fill="#c8ccd4"/>
</g>
<rect x="7" y="413" width="9" height="12" fill="#c0c4cc"/><circle cx="17" cy="422" r="5" fill="#d8dce0"/><rect x="13" y="410" width="7" height="7" fill="#c8ccd4"/>
<rect x="7" y="437" width="10" height="10" fill="#7d94b8"/><circle cx="17" cy="443" r="5" fill="#c8ccd0"/>
<path d="M8 471l14-14M15 464v9M8 458l7 6" stroke="#d0d4dc" fill="none"/>
<rect x="7" y="478" width="15" height="15" fill="#6c80a8" stroke="#ddd"/><rect x="7" y="500" width="15" height="15" fill="#7890bc" stroke="#ddd"/>
<rect x="7" y="522" width="15" height="14" rx="3" fill="#d0d4dc"/><circle cx="14" cy="528" r="4" fill="#6b8098" stroke="#333"/>
<rect x="7" y="543" width="15" height="15" fill="#ddd"/><path d="M7 548h15M7 553h15M12 543v15M17 543v15" stroke="#666"/>
<text x="7" y="579" font-size="19" fill="#e0e0e0">A</text>

<!-- bottom toolbar row -->
<rect x="0" y="882" width="1728" height="33" fill="#5a5a5a"/>
<rect x="0" y="882" width="31" height="33" fill="#6c6c6c"/>
<rect x="31" y="887" width="866" height="24" fill="#4e4e4e" stroke="#333"/>
<path d="M36 890v18" stroke="#aaa" stroke-dasharray="1 1" stroke-width="2"/>
<path d="M159 888v22" stroke="#333"/>
<g fill="#b9b9b9">
<rect x="43" y="889" width="17" height="19"/><rect x="66" y="889" width="17" height="19"/><rect x="89" y="889" width="17" height="19"/><rect x="112" y="889" width="17" height="19"/><rect x="135" y="889" width="17" height="19"/><rect x="164" y="889" width="17" height="19"/><rect x="187" y="889" width="17" height="19"/><rect x="210" y="889" width="17" height="19"/><rect x="233" y="889" width="17" height="19"/><rect x="256" y="889" width="17" height="19"/><rect x="279" y="889" width="17" height="19"/><rect x="302" y="889" width="17" height="19"/><rect x="325" y="889" width="17" height="19"/><rect x="348" y="889" width="17" height="19"/><rect x="371" y="889" width="17" height="19"/><rect x="394" y="889" width="17" height="19"/><rect x="417" y="889" width="17" height="19"/><rect x="440" y="889" width="17" height="19"/><rect x="463" y="889" width="17" height="19"/><rect x="486" y="889" width="17" height="19"/><rect x="509" y="889" width="17" height="19"/><rect x="532" y="889" width="17" height="19"/><rect x="555" y="889" width="17" height="19"/><rect x="578" y="889" width="17" height="19"/><rect x="601" y="889" width="17" height="19"/><rect x="624" y="889" width="17" height="19"/><rect x="647" y="889" width="17" height="19"/><rect x="670" y="889" width="17" height="19"/><rect x="693" y="889" width="17" height="19"/><rect x="716" y="889" width="17" height="19"/><rect x="739" y="889" width="17" height="19"/><rect x="762" y="889" width="17" height="19"/><rect x="785" y="889" width="17" height="19"/><rect x="807" y="889" width="17" height="19"/><rect x="831" y="889" width="17" height="19"/><rect x="853" y="889" width="17" height="19"/><rect x="877" y="889" width="17" height="19"/>
</g>
<rect x="45" y="890" width="13" height="9" fill="#2f7a2f"/><rect x="45" y="899" width="5" height="8" fill="#c83030"/><rect x="50" y="899" width="4" height="8" fill="#d8c030"/><rect x="54" y="899" width="4" height="8" fill="#2848b0"/>
<rect x="68" y="890" width="13" height="17" fill="#222"/><rect x="71" y="892" width="7" height="5" fill="#ddd"/><rect x="71" y="900" width="7" height="7" fill="#999"/>
<path d="M97 890l6 6-6 6-6-6zM91 898l5 8" fill="none" stroke="#111" stroke-width="1.200"/>
<rect x="114" y="891" width="7" height="8" fill="#fff" stroke="#333"/><path d="M122 896h6M122 900h6M122 904h6" stroke="#1a6a5a" stroke-width="1.300"/>
<rect x="137" y="890" width="13" height="5" fill="#1e9a3a"/><path d="M138 897v9M142 897v9M146 897v9M150 897v9" stroke="#0a5a2a" stroke-width="1.500"/>
<rect x="166" y="890" width="13" height="16" fill="#111"/><circle cx="172" cy="896" r="4" fill="#6dd"/><rect x="168" y="903" width="9" height="2" fill="#d02030"/>
<path d="M189 891v16M202 891v16" stroke="#c02030" stroke-width="1.800"/><path d="M194 894h5l-5 10h5" stroke="#1a7a3a" fill="none" stroke-width="1.300"/>
<path d="M222 891c-8 3 0 7-4 10-2 1-3 3-1 6" stroke="#c83040" fill="none"/>
<rect x="235" y="903" width="13" height="2" fill="#c02030"/><path d="M239 901l4-10 3 1-4 9z" fill="#111"/>
<path d="M258 898h13M258 903h13" stroke="#b01020" stroke-width="1.800"/><rect x="261" y="892" width="7" height="5" fill="#fff" stroke="#111"/>
<path d="M281 892h13M281 904h13" stroke="#b01020" stroke-width="1.800"/><path d="M287 894v7M284 898l3 4 3-4" stroke="#111" fill="none"/>
<path d="M304 892h13M304 897h13M304 902h13" stroke="#1a8a40" stroke-width="1.500"/><path d="M304 894.500h13M304 899.500h13M304 905h13" stroke="#a01040" stroke-width="1.300"/>
<rect x="327" y="891" width="13" height="15" fill="none" stroke="#222"/><rect x="331" y="896" width="7" height="8" fill="none" stroke="#0a7a2a"/>
<path d="M351 906l12-15M355 906l8-10M349 900l8-9" stroke="#222" fill="none"/>
<path d="M373 907h13M375 895l6-4 5 4-6 8z" stroke="#222" fill="#ddd"/>
<path d="M396 899h13" stroke="#111"/><circle cx="402" cy="895" r="3" fill="#c03040"/><circle cx="397" cy="900" r="2" fill="#222"/><circle cx="407" cy="900" r="2" fill="#222"/>
<path d="M419 898h13M425 892v13" stroke="#1840a0" stroke-width="2.200"/>
<path d="M445 891v15M450 891v15" stroke="#a01828" stroke-width="1.200"/>
<rect x="465" y="891" width="13" height="15" fill="#eee" stroke="#222"/><path d="M465 896h13M465 901h13M470 891v15M474 891v15" stroke="#222"/><rect x="465" y="891" width="5" height="5" fill="#1a8a3a"/>
<path d="M490 892v13M488 905h8M498 892c0 6-4 8-8 8" stroke="#1030a0" fill="none"/>
<path d="M511 898h5M521 898h4" stroke="#777" stroke-dasharray="1 1"/><circle cx="518" cy="898" r="2.500" fill="none" stroke="#a03040"/>
<rect x="533" y="890" width="15" height="17" fill="#222"/><g fill="#c03040"><circle cx="536" cy="893" r="2"/><circle cx="541" cy="893" r="2"/><circle cx="546" cy="893" r="2"/><circle cx="536" cy="898" r="2"/><circle cx="541" cy="898" r="2"/><circle cx="546" cy="898" r="2"/><circle cx="536" cy="903" r="2"/><circle cx="541" cy="903" r="2"/><circle cx="546" cy="903" r="2"/></g>
<rect x="557" y="892" width="13" height="13" fill="#222"/><path d="M559 903l9-9v9z" fill="#fff"/>
<path d="M580 898h13" stroke="#c02030"/><path d="M585 894v8M589 894v8M585 898h4" stroke="#111"/>
<path d="M603 893h13M603 897h13M603 901h13M603 905h13" stroke="#b01828" stroke-width="1.300"/><path d="M608 890v14M612 890v14" stroke="#222"/>
<path d="M627 905l12-13" stroke="#a06020" stroke-width="3"/><path d="M627 892h7v7h-7z" fill="#3a8a3a"/>
<text x="650" y="904" font-size="14" fill="#1a30a0">字</text>
<rect x="672" y="891" width="13" height="15" fill="#dde" stroke="#223"/><path d="M672 896h13M672 901h13M678 891v15" stroke="#224"/>
<path d="M695 891v12l7-3v-9zM705 902v3" fill="#333"/><text x="695" y="907" font-size="6" fill="#111">100</text>
<path d="M718 892h13M718 904h13M720 890v16M725 890v16M730 890v16" stroke="#441010" fill="none"/>
<path d="M740 898h15" stroke="#666"/><circle cx="747" cy="898" r="4" fill="#fff" stroke="#222"/>
<rect x="762" y="889" width="17" height="19" fill="#2a7a5e"/><path d="M763 900c4-3 7 2 15-3" stroke="#111" fill="none"/>
<path d="M787 907l13-15M790 894h6M790 899h6M790 904h6" stroke="#222" fill="none"/>
<path d="M808 894h15M812 897l4 6 4-6" stroke="#222" fill="none"/>
<circle cx="839" cy="898" r="8" fill="#3ab44a"/><circle cx="837" cy="895" r="3" fill="#9fe89f"/>
<path d="M856 906v-13l8-3 5 3v13zM856 893l8 3 5-3M864 896v10" fill="#e8f0e8" stroke="#222"/>
<path d="M885 890c-7 6-7 11 0 17 7-6 7-11 0-17z" fill="#bfe8dc" stroke="#222"/>

<!-- command window -->
<rect x="25" y="915" width="1703" height="64" fill="#c5c5c5"/>
<rect x="0" y="915" width="25" height="87" fill="#4a4a4a"/>
<rect x="2" y="916" width="22" height="85" fill="#555" stroke="#333"/>
<path d="M5 921h18M5 923h18" stroke="#bbb" stroke-dasharray="1 1"/>
<text x="8" y="942" font-size="15" font-weight="bold" fill="#eee">x</text>
<path d="M8 952l5 3 2 10 2 2-3 2-2-3-2-8-3-2z" fill="#ddd"/>
<g class="m"><text x="27" y="928">命令：*取消*</text><text x="27" y="943">命令：*取消*</text><text x="27" y="958">命令：*取消*</text><text x="27" y="973">命令：*取消*</text></g>
<rect x="25" y="979" width="1703" height="23" fill="#fdfdfd"/><rect x="25" y="979" width="1703" height="1" fill="#555"/>
<rect x="30" y="984" width="14" height="14" fill="#e8e8e8" stroke="#666"/><path d="M33 988l4 3-4 3M37 995h5" stroke="#333" fill="none"/>
<path d="M49 990l3 3 3-3z" fill="#888"/>
<text x="63" y="995" font-size="13" font-style="italic" fill="#999">键入命令</text>

<!-- status rows -->
<rect x="0" y="1002" width="1728" height="30" fill="#353535"/>
<path d="M-5 1003h20l-2 17h-20zM26 1003h52l-8 20h-38z" fill="#4a4a4a"/><path d="M84 1003h22l-4 16h-22z" fill="#4a4a4a"/>
<text x="0" y="1018" font-size="12.500" fill="#ccc">局1</text><text x="38" y="1018" font-size="12.500" fill="#ccc">布局2</text><text x="90" y="1018" font-size="15" font-weight="bold" fill="#ccc">+</text>
<rect x="462" y="1003" width="1266" height="28" fill="#4a4a4a"/><rect x="462" y="1029" width="1266" height="3" fill="#8a8a8a"/>
<path d="M532 1003v27M607 1003v27M744 1003v27M775 1003v27M841 1003v27M893 1003v27M995 1003v27M1058 1003v27M1102 1003v27M1175 1003v27M1280 1003v27M1375 1003v27" stroke="#333"/>
<text x="464" y="1021" font-size="13" fill="#e8e8e8" textLength="64" lengthAdjust="spacingAndGlyphs">比例 1:100 ▾</text>
<text x="551" y="1021" font-size="13" fill="#e8e8e8" textLength="187" lengthAdjust="spacingAndGlyphs">641182.5863, -1.5597E+06, 0.0000</text>
<text x="749" y="1021" font-size="13" fill="#eee">模型</text>
<path d="M782 1011v14M785 1009v18M788 1011v14M791 1009v18M781 1014h11M781 1018h11M781 1022h11" stroke="#ccc"/>
<path d="M805 1011h14M805 1014h14M805 1017h14M805 1020h14M805 1023h14" stroke="#aaa" stroke-dasharray="1 1"/>
<path d="M827 1015l3 4 3-4z" fill="#ddd"/>
<path d="M849 1010h5v8h-5M849 1018v8" stroke="#ddd" fill="none"/>
<rect x="872" y="1011" width="3" height="6" fill="#5aa0e0"/><rect x="875" y="1017" width="10" height="7" fill="#3a8ad8"/><path d="M873 1015h4M875 1012v5" stroke="#6fc"/>
<path d="M898 1009v14h11" stroke="#ddd" fill="none"/><path d="M902 1023v-6h6" stroke="#ddd" fill="none"/>
<circle cx="928" cy="1018" r="7" fill="none" stroke="#ccc"/><path d="M928 1018h7" stroke="#ccc"/><path d="M945 1016l3 4 3-4zM984 1016l3 4 3-4z" fill="#ddd"/>
<path d="M960 1008l10 20M972 1008l-10 20" stroke="#bbb" fill="none"/>
<path d="M1001 1024l14-14v14z" fill="none" stroke="#4a90e0" stroke-width="1.500"/>
<rect x="1026" y="1011" width="13" height="14" fill="none" stroke="#3a90e0" stroke-width="1.300"/><rect x="1025" y="1010" width="3" height="3" fill="#6f6"/>
<path d="M1068 1023h14l-3-5h-8zM1072 1016h6l-1-3h-4z" fill="#d8d8d8"/>
<rect x="1089" y="1009" width="16" height="17" fill="#2f6fba"/><path d="M1091 1012l11 11M1102 1012l-11 11" stroke="#cde"/>
<path d="M1122 1013h6M1125 1010v6" stroke="#ddd"/><rect x="1122" y="1020" width="10" height="4" fill="#9ab870"/>
<path d="M1146 1014l7-4 7 4v9l-7 4-7-4z" fill="none" stroke="#bbb"/><rect x="1143" y="1010" width="4" height="4" fill="#6f6"/>
<path d="M1180 1024l13-14 1 14z" fill="#3a80d0"/>
<path d="M1212 1013l8-4 8 4v10l-8 4-8-4zM1212 1013l8 4 8-4M1220 1017v10" fill="none" stroke="#bbb"/>
<path d="M1249 1010l8 8-8 8-8-8z" fill="none" stroke="#bbb"/><path d="M1242 1016l7-6M1250 1027l7-6" stroke="#c04030"/>
<path d="M1296 1010c-3 6-4 9-8 14h5l3-4 3 4h5c-4-5-5-8-8-14z" fill="#2f78d0"/>
<path d="M1322 1010c-3 6-4 9-8 14h5l3-4 3 4h5c-4-5-5-8-8-14zM1345 1010c-3 6-4 9-8 14h5l3-4 3 4h5c-4-5-5-8-8-14z" fill="#aaa"/>
<text x="1358" y="1022" font-size="12.500" fill="#ddd">1:1 / 100%</text><path d="M1416 1015l3 4 3-4z" fill="#ddd"/>
<circle cx="1441" cy="1018" r="6" fill="#bbb"/><path d="M1481 1011v14M1474 1018h14" stroke="#ccc" stroke-width="1.500"/>
<path d="M1508 1011l5 3v9l-5 3z" fill="#bbb"/>
<text x="1525" y="1022" font-size="12" fill="#ddd">小数</text><path d="M1582 1015l3 4 3-4z" fill="#ddd"/>
<rect x="1601" y="1012" width="9" height="11" fill="none" stroke="#bbb"/>

<!-- IME -->
<rect x="1621" y="1005" width="107" height="25" fill="#fafafa"/>
<path d="M1621 1005h26v23h-26z" fill="#cf4a22"/><text x="1627" y="1024" font-size="19" font-weight="bold" fill="#fff">S</text>
<text x="1651" y="1023" font-size="15" font-weight="bold" fill="#1a6ec8">中</text>
<text x="1668" y="1022" font-size="14" fill="#1a6ec8">°,</text>
<circle cx="1702" cy="1017" r="7" fill="#d8ecf8" stroke="#1a6ec8"/><path d="M1699 1015h.5M1705 1015h.5M1699 1020c2 2 4 2 6 0" stroke="#1a6ec8" fill="none"/>
<path d="M1717 1012v11M1722 1012v11" stroke="#1a6ec8" stroke-width="2"/>

<!-- stripe -->
<rect x="0" y="1032" width="1728" height="8" fill="#b4b4b4"/>
<path d="M66 1032v8M183 1032v8M258 1032v8" stroke="#777"/>
<rect x="1540" y="1032" width="17" height="9" fill="#dcc888" stroke="#b09a50"/>
<g fill="#555"><rect x="1563" y="1035" width="5" height="1"/><rect x="1575" y="1035" width="2" height="2"/><rect x="1587" y="1035" width="2" height="2"/></g>
<path d="M1660 1033a7 7 0 0 0 14 0" fill="none" stroke="#888"/>

<!-- taskbar -->
<rect x="0" y="1040" width="1728" height="40" fill="#162340"/>
<rect x="0" y="1040" width="1728" height="2" fill="#3a2a40"/>
<rect x="349" y="1041" width="47" height="39" fill="#2d4568"/>
<circle cx="24" cy="1060" r="6.500" fill="none" stroke="#f2f2f2" stroke-width="1.800"/>
<path d="M65 1053h12M65 1067h12M65 1057h12v6h-12z" fill="none" stroke="#eee" stroke-width="1.300"/><path d="M80 1055v2M80 1060v2" stroke="#eee" stroke-width="1.300"/>
<g fill="#f2f2f2"><path d="M122 1059c-6 0-11-3-10-8 3-4 9-3 10 1z"/><path d="M122 1059c6 0 11-3 10-8-3-4-9-3-10 1z"/><path d="M122 1061c-6 0-11 3-10 8 3 4 9 3 10-1z"/><path d="M122 1061c6 0 11 3 10 8-3 4-9 3-10-1z"/></g>
<circle cx="177" cy="1060" r="10.500" fill="#76c23e"/><path d="M171 1060h11a5.500 5.500 0 0 0-11-1 6 6 0 0 0 10 5" fill="none" stroke="#e8f4d0" stroke-width="2"/>
<rect x="214" y="1048" width="24" height="24" fill="#f4eeee"/><text x="226" y="1068" font-size="21" font-weight="bold" text-anchor="middle" fill="#b01228">A</text>
<rect x="264" y="1051" width="22" height="19" fill="#e4b842"/><rect x="264" y="1048" width="11" height="5" fill="#c99a2c"/><rect x="270" y="1062" width="12" height="8" fill="#3b7bb8"/>
<rect x="313" y="1048" width="21" height="24" fill="#e9d0b8"/><text x="315" y="1066" font-size="17" font-weight="bold" fill="#c04a1a">P</text><circle cx="328" cy="1066" r="4" fill="#d0582a"/>
<path d="M372 1049l11 11-11 11-11-11z" fill="#2aa8e0"/><path d="M361 1063l11 11 11-11" fill="#3a6ea8"/><path d="M369 1056l6 4-6 4z" fill="#fff"/>
<path d="M206 1078h40M255 1078h40M304 1078h40M349 1078h47" stroke="#8fc0e4" stroke-width="2"/>
<path d="M1534 1063l5-5 5 5" fill="none" stroke="#e8e8e8" stroke-width="1.200"/>
<path d="M1556 1056h3l3-3v14l-3-3h-3z" fill="none" stroke="#e8e8e8"/><path d="M1564 1056c2 2 2 6 0 8M1567 1054c3 3 3 9 0 12" fill="none" stroke="#e8e8e8"/>
<rect x="1581" y="1053" width="14" height="11" fill="none" stroke="#e8e8e8"/><rect x="1580" y="1052" width="6" height="6" fill="#162340" stroke="#e8e8e8"/><path d="M1588 1064v4M1584 1068h8" stroke="#e8e8e8"/>
<text x="1605" y="1065" font-size="13.500" fill="#eee">中</text>
<rect x="1632" y="1052" width="15" height="18" rx="3" fill="#d04a2a" transform="rotate(-4 1640 1061)"/><text x="1636" y="1066" font-size="14" font-weight="bold" fill="#fff">S</text>
<text x="1665" y="1055" font-size="12.500" fill="#e8e8e8">21:28 周四</text>
<text x="1661" y="1073" font-size="12.500" fill="#e8e8e8">2020/11/19</text>

<!-- tooltip -->
<rect x="1618" y="967" width="110" height="34" fill="#fbfbfb" stroke="#bbb"/>
<text x="1627" y="983" font-size="12" fill="#555">个性设置，点我看看</text>

<!-- overlay watermark text -->
<text x="1040" y="1018" font-size="50" fill="#000" stroke="#000" stroke-width=".4" letter-spacing="1" xml:space="preserve">欢迎加入给排水大家庭 762348</text>

<!-- chat panel -->
<rect x="1517" y="80" width="211" height="620" fill="#fbfbfb"/>
<rect x="1517" y="80" width="211" height="17" fill="#eeeeee"/>
<rect x="1517" y="97" width="139" height="3.500" fill="#000"/>
<rect x="1656" y="97" width="72" height="40" fill="#f0f0f0"/>
<text x="1566" y="124" font-size="14" font-weight="bold" fill="#333">讨论区</text>
<text x="1698" y="124" font-size="14" fill="#999">成员</text>
<g class="c">
<text x="1535" y="152">性炭吸附的是啥？是吸附剩余的臭氧</text>
<text x="1535" y="209">管网互通，是浑水互通，还是产品水</text>
<text x="1535" y="264">会讲这三种滤池区分选择的原理吗？</text>
<text x="1535" y="320">预处理中，什么时候考虑活性炭吸附</text>
<text x="1535" y="338">时候考虑化学预氧化，怎么选择区分</text>
<text x="1535" y="393">蜂窝斜管是起什么作用的呢？</text>
<text x="1535" y="449">斜管一般选择圆管还是蜂窝</text>
<text x="1535" y="505">平衡池的目的是啥？不设置行不行？</text>
</g>
<g fill="#2fc48a">
<ellipse cx="1544" cy="180" rx="8.500" ry="8"/><ellipse cx="1544" cy="235" rx="8.500" ry="8"/><ellipse cx="1544" cy="292" rx="8.500" ry="8"/><ellipse cx="1544" cy="366" rx="8.500" ry="8"/><ellipse cx="1544" cy="421" rx="8.500" ry="8"/><ellipse cx="1544" cy="477" rx="8.500" ry="8"/>
</g>
<g fill="#fff">
<ellipse cx="1543" cy="179" rx="4.500" ry="3"/><ellipse cx="1546" cy="182" rx="3.500" ry="2.500"/><ellipse cx="1543" cy="234" rx="4.500" ry="3"/><ellipse cx="1546" cy="237" rx="3.500" ry="2.500"/><ellipse cx="1543" cy="291" rx="4.500" ry="3"/><ellipse cx="1546" cy="294" rx="3.500" ry="2.500"/><ellipse cx="1543" cy="365" rx="4.500" ry="3"/><ellipse cx="1546" cy="368" rx="3.500" ry="2.500"/><ellipse cx="1543" cy="420" rx="4.500" ry="3"/><ellipse cx="1546" cy="423" rx="3.500" ry="2.500"/><ellipse cx="1543" cy="476" rx="4.500" ry="3"/><ellipse cx="1546" cy="479" rx="3.500" ry="2.500"/>
</g>
<g class="n">
<text x="1558" y="184">LYJ</text><text x="1558" y="240">朝鲜雪糕</text><text x="1558" y="296">朝鲜雪糕</text><text x="1558" y="370">装，继续装...</text><text x="1558" y="426">朝鲜雪糕</text><text x="1558" y="482">朝鲜雪糕</text>
</g>
<rect x="1520" y="524" width="208" height="1" fill="#e4e4e4"/>
<circle cx="1543" cy="541" r="6" fill="none" stroke="#666"/><path d="M1540 543c1.500 1.500 4.500 1.500 6 0M1540.500 539h1M1545 539h1" stroke="#666" fill="none"/>
<path d="M1568 535l10 9M1578 535l-10 9" stroke="#555"/><circle cx="1568" cy="546" r="2" fill="none" stroke="#555"/><circle cx="1578" cy="546" r="2" fill="none" stroke="#555"/>
<rect x="1596.500" y="535.500" width="13" height="11" fill="none" stroke="#666"/><path d="M1597 545l4-4 3 2 3-3 2 3" fill="none" stroke="#666"/>
<ellipse cx="1624" cy="610" rx="15" ry="15" fill="#6db570"/>
<path d="M1621 603h6M1621 617h6M1624 603v14" stroke="#4d6a50" stroke-width="1.100"/>
<path d="M1716 630h12v28h-12a14 14 0 0 1 0-28z" fill="#e6e6e6"/><text x="1720" y="649" font-size="13" fill="#333">发</text>
<rect x="1517" y="670" width="211" height="1" fill="#e4e4e4"/>
<rect x="1539" y="679" width="7" height="10" rx="3.500" fill="#666"/><path d="M1537 686a6 6 0 0 0 11 0M1542 692v2M1539 694h7" fill="none" stroke="#666"/>
<path d="M1569 684h4l6-4v13l-6-4h-4zM1581 684v5" fill="none" stroke="#666"/>
<path d="M1603 692l2-12h9l-2 5M1603 692l10-6" fill="none" stroke="#666" stroke-width="1.300"/>
<rect x="1632" y="674" width="1" height="20" fill="#e4e4e4"/>
<text x="1652" y="691" font-size="12" fill="#888">资源监控</text>
<rect x="1704" y="677" width="24" height="18" fill="#7fa83a"/>
<path d="M1716 677v8M1719 677v6" stroke="#ddd"/>
<rect x="1517" y="700" width="211" height="1" fill="#333"/>
</svg>
</body></html>
